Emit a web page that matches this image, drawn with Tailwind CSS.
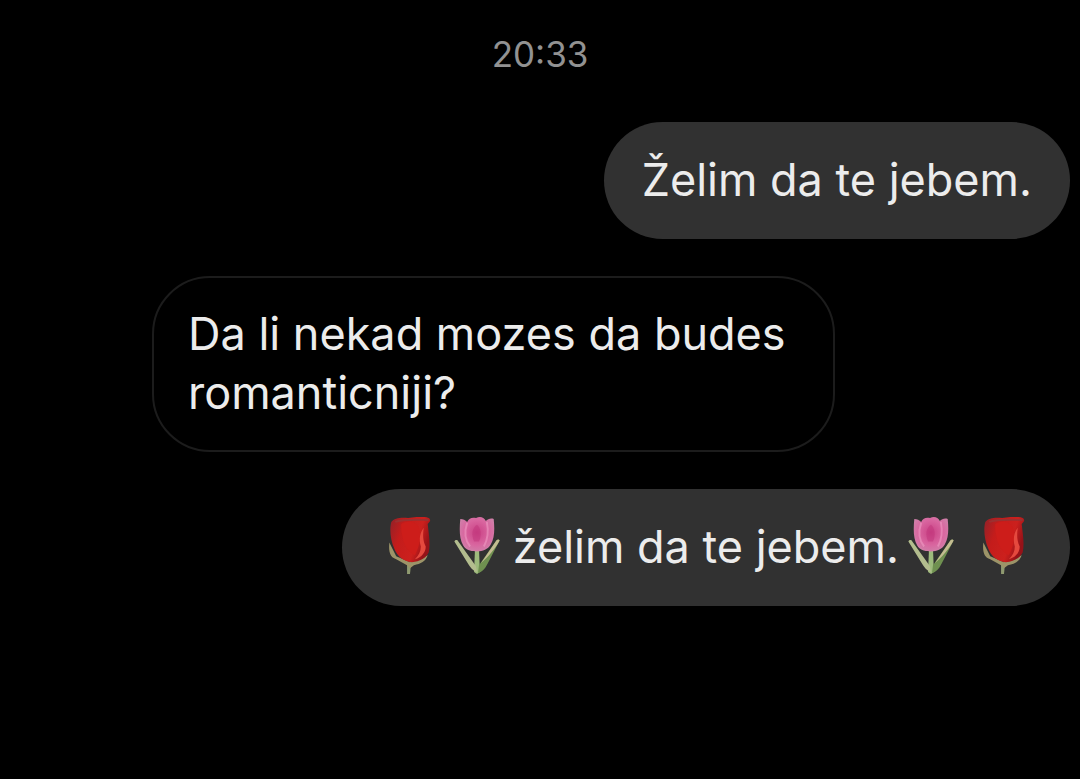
<!doctype html>
<html lang="sr">
  <head>
    <meta charset="UTF-8">
    <meta name="viewport" content="width=device-width, initial-scale=1.0">
    <title>Chat</title>
    <script src="https://cdn.jsdelivr.net/npm/@tailwindcss/browser@4"></script>
  </head>

  <body class="bg-black min-h-screen font-['Inter',sans-serif] text-[#ececec]">
    <!-- Flower symbols shared by the messages -->
    <svg class="absolute h-0 w-0" aria-hidden="true">
      <defs>
        <linearGradient id="petalRed" x1="0" x2="1" y1="0" y2="0.4">
          <stop offset="0" stop-color="#8f2229" />
          <stop offset="0.35" stop-color="#c41c1b" />
          <stop offset="0.75" stop-color="#cc201d" />
          <stop offset="1" stop-color="#961218" />
        </linearGradient>
        <radialGradient id="petalPink" cx="0.5" cy="0.45" r="0.6">
          <stop offset="0" stop-color="#c94084" />
          <stop offset="0.6" stop-color="#d9659f" />
          <stop offset="1" stop-color="#cf82aa" />
        </radialGradient>
      </defs>
      <symbol id="rose" viewBox="0 0 48 60">
        <path d="M22 48h4l-1 10h-3z" fill="#8f9a70" />
        <path d="M4 26c-1 10 1 15 7 17l11 6 3 3 4-3c7-1 12-4 14-10l-10 4-8 3-14-6z" fill="#9c9468" />
        <path d="M6 5c3-4 10-5 17-4 7-1 16-2 21 0 3 2 1 4-1 6 1 9 3 20 1 29-3 6-9 9-17 10-9-1-15-6-18-14C5 23 4 12 6 5z" fill="url(#petalRed)" />
        <path d="M16 7c8-4 16-2 18 4 3 8 1 18-4 28-8-4-14-14-14-32z" fill="#cd1d1a" />
        <path d="M39 11c-4 5-5 12-3 19 0 5-2 9-6 13 7-2 11-7 11-13-3-6-3-12-2-19z" fill="#e5493e" />
        <path d="M10 5c8-3 23-2 34-2" fill="none" stroke="#9c3030" stroke-width="2" />
      </symbol>
      <symbol id="tulip" viewBox="0 0 48 60">
        <path d="M22 32h4l1 24-3 2-3-2z" fill="#9dba7c" />
        <path d="M1 25c1-2 3-2 4 0l18 25 1 6c-4-1-7-5-10-10z" fill="#b3bd8e" />
        <path d="M47 24c-1-2-3-1-4 1L26 49l-1 8c4-1 7-4 10-10z" fill="#6f9050" />
        <path d="M47 24c-1-2-3-1-4 1L28 47c7-6 15-15 19-23z" fill="#c4bc91" />
        <path d="M7 2c3 0 5 1 7 3 2-4 5-5 9-4 4-2 8-1 10 3 2-2 5-3 8-2 1 11 1 19-3 26-3 5-8 7-14 7s-11-1-14-6C6 22 6 13 7 2z" fill="url(#petalPink)" />
        <path d="M24 8c4 3 5 11 2 17h-5c-3-7-2-14 3-17z" fill="#c0337a" opacity="0.5" />
        <path d="M14 6c-3 9-2 18 3 24M34 5c2 10 1 18-3 25" fill="none" stroke="#f3a3ca" stroke-width="2" opacity="0.5" />
      </symbol>
    </svg>

    <main class="flex flex-col gap-[37px] py-8">
      <time datetime="20:33" class="mb-2 text-center text-[35px] leading-[45px] text-[#929292]">20:33</time>

      <!-- Sent -->
      <div class="mr-[10px] self-end rounded-full bg-[#313131] px-[38px] pt-[28px] pb-[30px] text-[45px] leading-[59px]">
        <p>Želim da te jebem.</p>
      </div>

      <!-- Received -->
      <div class="ml-[152px] max-w-[683px] self-start rounded-[58px] border-2 border-[#1c1c1c] px-[34px] pt-[26px] pb-[28px] text-[45px] leading-[59px]">
        <p>Da li nekad mozes da budes romanticniji?</p>
      </div>

      <!-- Sent -->
      <div class="mr-[10px] flex items-center self-end rounded-full bg-[#313131] px-[43px] pt-[28px] pb-[30px] text-[45px] leading-[59px]">
        <svg class="h-[59px] w-12" role="img" aria-label="rose"><use href="#rose" /></svg>
        <svg class="ml-5 h-[59px] w-12" role="img" aria-label="tulip"><use href="#tulip" /></svg>
        <p class="ml-3 mr-2">želim da te jebem.</p>
        <svg class="h-[59px] w-12" role="img" aria-label="tulip"><use href="#tulip" /></svg>
        <svg class="ml-6 h-[59px] w-12" role="img" aria-label="rose"><use href="#rose" /></svg>
      </div>
    </main>
  </body>
</html>
